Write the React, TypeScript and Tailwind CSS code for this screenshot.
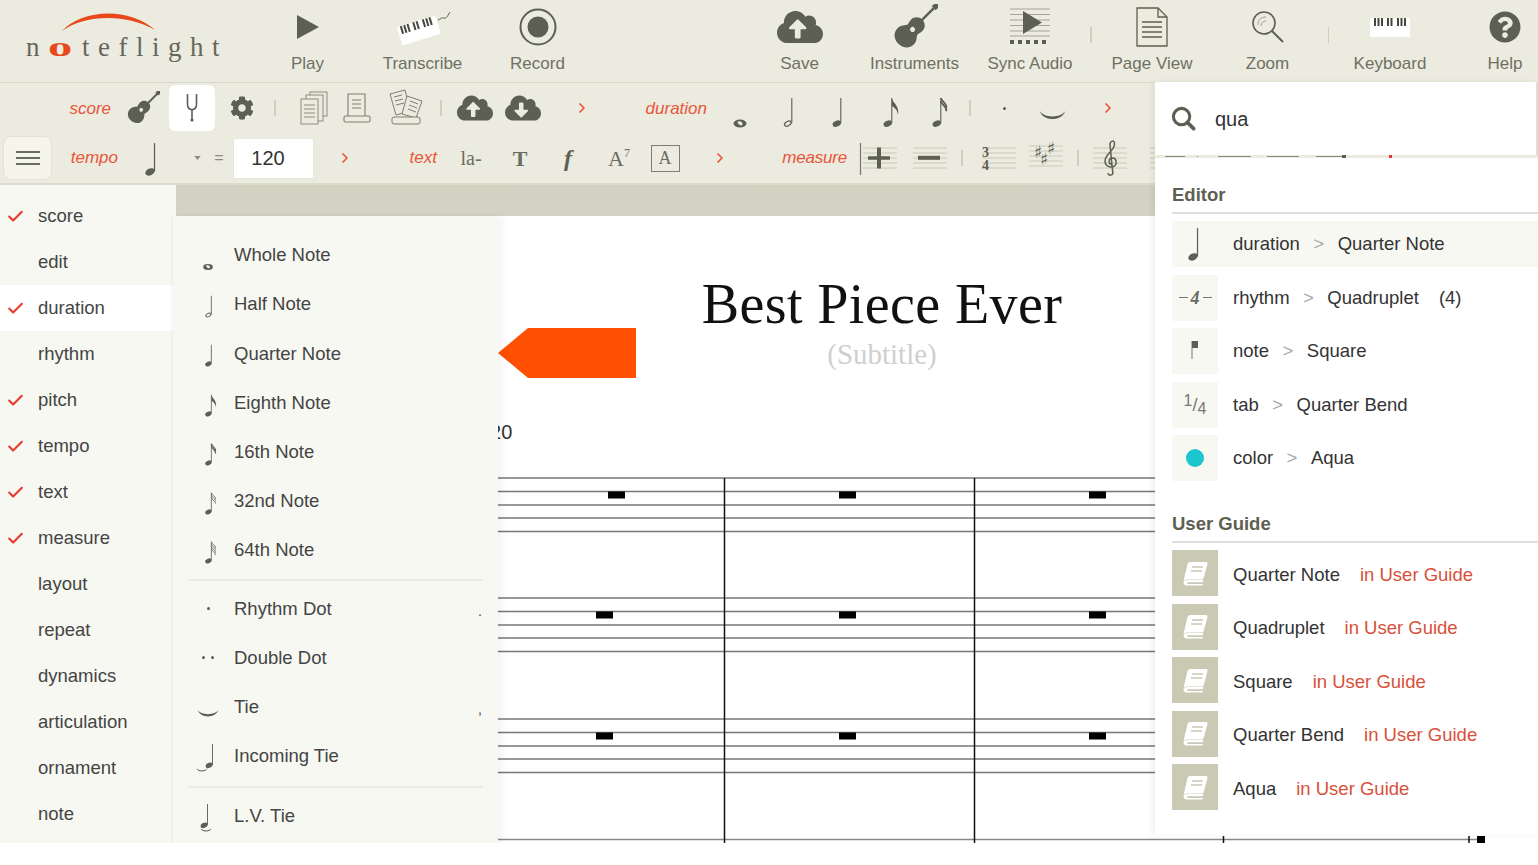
import React from "react";
import { Check, ChevronRight } from "lucide-react";
import { FaCloudUploadAlt, FaCloudDownloadAlt, FaCog, FaQuestionCircle } from "react-icons/fa";

const INK = "#5d5f52";

function Note({ kind = "quarter", flags = 0, className = "h-[32px] w-[24px]" }: { kind?: "whole" | "half" | "quarter"; flags?: number; className?: string }) {
  return (
    <svg viewBox="0 0 24 32" className={`shrink-0 ${className}`} fill={INK}>
      {kind === "whole" ? (
        <path fillRule="evenodd" d="M5.500 26.500a6.500 4 0 1 0 13 0a6.500 4 0 1 0-13 0zM9.800 24.800c.9-1.100 3.400-.6 4.300.9s.2 2.600-.7 2.700c-1.400.1-4.500-2-3.600-3.600z" />
      ) : (
        <>
          <path d="M13.800 1v25" stroke={INK} strokeWidth="1.100" />
          {kind === "half" ? (
            <ellipse cx="9.800" cy="26.600" rx="3.600" ry="2.100" fill="none" stroke={INK} strokeWidth="1.200" transform="rotate(-28 9.800 26.600)" />
          ) : (
            <ellipse cx="9.800" cy="26.600" rx="4.400" ry="3" transform="rotate(-25 9.800 26.600)" />
          )}
          {flags === 1 && <path d="M13.800 1c.8 5 8 7.500 6.200 17c-.4-5-3.600-7.500-6.200-9z" />}
          {flags > 1 &&
            Array.from({ length: flags }).map((_, i) => (
              <path key={i} d={`M13.800 ${1 + i * 3.2}c1 4 6 4.500 5.600 ${flags > 2 ? 8 : 10}`} fill="none" stroke={INK} strokeWidth={flags > 2 ? 1.1 : 1.7} />
            ))}
        </>
      )}
    </svg>
  );
}

function Tie({ className = "h-[11px] w-[27px]" }: { className?: string }) {
  return (
    <svg viewBox="0 0 30 12" className={`shrink-0 ${className}`} fill={INK}>
      <path d="M1 1c3 12 25 12 28 0c-4 8-24 8-28 0z" />
    </svg>
  );
}

function Guitar({ className }: { className?: string }) {
  return (
    <svg viewBox="0 0 40 40" className={`shrink-0 ${className}`} fill={INK}>
      <g transform="rotate(45 20 20)">
        <path d="M20 11c4 0 7 3 7 7c0 3-1.200 4-.8 5.500c.5 1.500 3.800 3.500 3.800 8c0 5.500-4.500 9-10 9s-10-3.500-10-9c0-4.500 3.300-6.500 3.800-8c.4-1.500-.8-2.500-.8-5.500c0-4 3-7 7-7z" />
        <rect x="18.900" y="-5" width="2.200" height="20" />
        <rect x="17.600" y="-9" width="4.800" height="6" />
        <circle cx="20" cy="23" r="2.200" fill="#ecebdf" />
      </g>
    </svg>
  );
}

function Fork() {
  return (
    <svg viewBox="0 0 14 30" className="h-[30px] w-[14px]" fill="none" stroke={INK} strokeWidth="1.600">
      <path d="M2.500 1v10c0 4 2 5.500 4.500 5.500s4.500-1.500 4.500-5.500V1" />
      <path d="M7 16v10" />
      <circle cx="7" cy="27" r="1.600" fill={INK} stroke="none" />
    </svg>
  );
}

function Pages() {
  return (
    <svg viewBox="0 0 28 34" className="h-[34px] w-[28px]" fill="#ecebdf" stroke="#8a8b7e" strokeWidth="1">
      <rect x="10" y="1" width="17" height="24" />
      <rect x="6" y="4" width="17" height="26" />
      <rect x="1" y="8" width="17" height="25" />
      <path d="M4 14h11M4 18h11M4 22h11M4 26h11" />
    </svg>
  );
}

function Printer() {
  return (
    <svg viewBox="0 0 28 32" className="h-[32px] w-[28px]" fill="none" stroke="#7d7e71" strokeWidth="1.100">
      <path d="M5 24V2h17v22" />
      <path d="M9 8h9M9 12h9M9 16h9" />
      <rect x="1" y="24" width="26" height="6" rx="1.500" />
    </svg>
  );
}

function MultiPrinter() {
  return (
    <svg viewBox="0 0 38 38" className="h-[38px] w-[38px]" fill="#ecebdf" stroke="#7d7e71" strokeWidth="1">
      <path d="M3 5l15-4 5 21-14 4z" />
      <path d="M20 7l15 5-6 17-14-4z" />
      <path d="M7 8l8-2M8 12l8-2M9 16l8-2M23 12l8 3M22 16l8 3M21 20l8 3" />
      <rect x="5" y="28" width="28" height="7" rx="2" />
    </svg>
  );
}

function Keys({ className }: { className?: string }) {
  return (
    <svg viewBox="0 0 40 19" className={className}>
      <rect width="40" height="19" fill="#ffffff" />
      {[4, 7.5, 11, 17, 20.5, 27, 30.5, 34].map((x) => (
        <rect key={x} x={x} y="0" width="2" height="8" fill="#45463d" />
      ))}
    </svg>
  );
}

function Transcribe() {
  return (
    <svg viewBox="0 0 56 36" className="h-[36px] w-[56px]">
      <g transform="rotate(-17 24 22)">
        <rect x="4" y="12" width="40" height="19" fill="#ffffff" />
        {[7, 10.5, 14, 20, 23.5, 30, 33.5, 37].map((x) => (
          <rect key={x} x={x} y="12" width="2" height="8" fill="#45463d" />
        ))}
      </g>
      <path d="M43 11c3-1 4-3 6-2s3-1 6-6" fill="none" stroke={INK} strokeWidth="1" />
    </svg>
  );
}

function SyncAudio() {
  return (
    <svg viewBox="0 0 42 38" className="h-[38px] w-[42px]">
      <path d="M1 1h40M1 6.500h40M1 12h40M1 17.500h40M1 23h40" stroke="#a5a699" strokeWidth="1" />
      <path d="M14 3l19 11.500L14 26z" fill={INK} />
      {[1, 9, 17, 25, 33].map((x) => (
        <rect key={x} x={x} y="32" width="4" height="4" fill={INK} />
      ))}
      <path d="M1 28h40" stroke="#a5a699" strokeWidth="1" />
    </svg>
  );
}

function PageView() {
  return (
    <svg viewBox="0 0 32 40" className="h-[40px] w-[32px]" fill="#ecebdf" stroke={INK} strokeWidth="1.300">
      <path d="M1 1h21l9 9v29H1z" />
      <path d="M22 1v9h9" fill="none" />
      <path d="M6 15h20M6 20h20M6 25h20M6 30h20" strokeWidth="1.600" />
    </svg>
  );
}

function ZoomGlass() {
  return (
    <svg viewBox="0 0 34 34" className="h-[34px] w-[34px]" fill="none" stroke={INK}>
      <circle cx="13" cy="13" r="11" strokeWidth="1.600" />
      <path d="M7 15c0-5 3-8 8-8M10 16c0-3 2-5 5-5" strokeWidth="1" stroke="#9c9d90" />
      <path d="M21 21l11 11" strokeWidth="2" />
    </svg>
  );
}

function Staff({ children, left }: { children?: React.ReactNode; left?: boolean }) {
  return (
    <svg viewBox="0 0 38 30" className="h-[30px] w-[38px] shrink-0 overflow-visible" fill={INK}>
      <path d="M3 5h34M3 10h34M3 15h34M3 20h34M3 25h34" stroke="#c8c8ba" strokeWidth="1" />
      {left && <path d="M.5 0v32" stroke="#75766a" strokeWidth="1.200" />}
      {children}
    </svg>
  );
}

function Clef() {
  return (
    <svg viewBox="0 0 40 38" className="h-[38px] w-[40px] shrink-0" fill="none">
      <path d="M3 9h34M3 14h34M3 19h34M3 24h34M3 29h34" stroke="#c8c8ba" strokeWidth="1" />
      <path d="M23 33c0 4-5 4-5 1M22.800 34L20 6c-.3-4 4.500-6 4.500-1c0 7-9.500 10-9.500 17c0 5 5 7 8.500 5.500c4-2 3.500-9-1.500-8.500c-3.500.4-4 5.500-.5 6.500" stroke={INK} strokeWidth="1.500" />
    </svg>
  );
}

function Sep({ className = "h-[16px]" }: { className?: string }) {
  return <div className={`w-[1.5px] shrink-0 bg-[#cfcfc1] ${className}`} />;
}

function Chev() {
  return <ChevronRight className="h-[16px] w-[16px] shrink-0 text-[#e8553a]" strokeWidth={2.6} />;
}

function Label({ children, className }: { children: React.ReactNode; className: string }) {
  return <div className={`flex items-center justify-end text-[17px] italic text-[#e8553a] ${className}`}>{children}</div>;
}

function Slot({ className, children }: { className: string; children?: React.ReactNode }) {
  return <div className={`flex h-full shrink-0 items-center justify-center ${className}`}>{children}</div>;
}

function TopItem({ label, className, children }: { label: string; className: string; children: React.ReactNode }) {
  return (
    <div className={`flex shrink-0 flex-col items-center ${className}`}>
      <div className="flex h-[54px] items-center justify-center">{children}</div>
      <div className="whitespace-nowrap text-[17px] leading-[20px] text-[#6f7064]">{label}</div>
    </div>
  );
}

function Header() {
  return (
    <div className="flex h-[83px] shrink-0 border-b border-[#d8d8ca] bg-[#ecebdf]">
      <div className="relative w-[250px] shrink-0 pl-[26px] pt-[30px]">
        <svg viewBox="0 0 100 24" className="absolute left-[61px] top-[9px] h-[23px] w-[95px]" preserveAspectRatio="none">
          <path d="M1 23C22 1 70-3 99 22C70 5 26 5 1 23z" fill="#e8481c" />
        </svg>
        <div className="flex whitespace-nowrap font-['Liberation_Serif',serif] text-[27px] leading-[34px] tracking-[8.500px] text-[#66675b]">
          <span>n</span>
          <span className="ml-[0px] inline-block w-[34px] origin-left scale-x-[1.800] font-bold leading-[34px] tracking-normal text-[#e8481c]">o</span>
          <span>teflight</span>
        </div>
      </div>
      <TopItem label="Play" className="w-[115px]">
        <svg viewBox="0 0 22 24" className="h-[24px] w-[22px]"><path d="M0 0l22 12L0 24z" fill={INK} /></svg>
      </TopItem>
      <TopItem label="Transcribe" className="w-[115px]"><Transcribe /></TopItem>
      <TopItem label="Record" className="w-[115px]">
        <svg viewBox="0 0 38 38" className="h-[38px] w-[38px]"><circle cx="19" cy="19" r="17.500" fill="none" stroke={INK} strokeWidth="2" /><circle cx="19" cy="19" r="10.500" fill={INK} /></svg>
      </TopItem>
      <div className="w-[147px] shrink-0" />
      <TopItem label="Save" className="w-[115px]"><FaCloudUploadAlt className="h-[44px] w-[46px] text-[#5d5f52]" /></TopItem>
      <TopItem label="Instruments" className="w-[115px]"><Guitar className="h-[46px] w-[46px]" /></TopItem>
      <TopItem label="Sync Audio" className="w-[116px]"><SyncAudio /></TopItem>
      <div className="flex w-[6px] shrink-0 items-start justify-center pt-[27px]"><Sep /></div>
      <TopItem label="Page View" className="w-[116px]"><PageView /></TopItem>
      <TopItem label="Zoom" className="w-[115px]"><ZoomGlass /></TopItem>
      <div className="flex w-[7px] shrink-0 items-start justify-center pt-[27px]"><Sep /></div>
      <TopItem label="Keyboard" className="w-[116px]"><Keys className="h-[19px] w-[40px]" /></TopItem>
      <TopItem label="Help" className="w-[114px]"><FaQuestionCircle className="h-[32px] w-[32px] text-[#5d5f52]" /></TopItem>
    </div>
  );
}

function Toolbar() {
  return (
    <div className="flex h-[102px] shrink-0 flex-col border-b-2 border-[#dcdccd] bg-[#ecebdf]">
      <div className="flex h-[50px] shrink-0 pl-[70px]">
        <Label className="w-[41px] pt-[2px]">score</Label>
        <Slot className="ml-[6px] w-[52px]"><Guitar className="h-[34px] w-[34px]" /></Slot>
        <Slot className="w-[46px]">
          <div className="flex h-[46px] w-[46px] items-center justify-center rounded-[6px] bg-white"><Fork /></div>
        </Slot>
        <Slot className="w-[54px]"><FaCog className="h-[24px] w-[24px] text-[#5d5f52]" /></Slot>
        <Slot className="w-[12px]"><Sep /></Slot>
        <Slot className="ml-[10px] w-[46px]"><Pages /></Slot>
        <Slot className="w-[40px]"><Printer /></Slot>
        <Slot className="w-[58px]"><MultiPrinter /></Slot>
        <Slot className="w-[12px]"><Sep /></Slot>
        <Slot className="w-[56px]"><FaCloudUploadAlt className="h-[34px] w-[36px] text-[#5d5f52]" /></Slot>
        <Slot className="w-[40px]"><FaCloudDownloadAlt className="h-[34px] w-[36px] text-[#5d5f52]" /></Slot>
        <Slot className="w-[78px]"><Chev /></Slot>
        <Label className="ml-[24px] w-[62px] pt-[2px]">duration</Label>
        <Slot className="w-[66px] pt-[10px]"><Note kind="whole" /></Slot>
        <Slot className="w-[34px] pt-[10px]"><Note kind="half" /></Slot>
        <Slot className="w-[64px] pt-[10px]"><Note /></Slot>
        <Slot className="w-[38px] pt-[10px]"><Note flags={1} /></Slot>
        <Slot className="w-[60px] pt-[10px]"><Note flags={2} /></Slot>
        <Slot className="w-[2px]"><Sep /></Slot>
        <Slot className="w-[66px]"><div className="h-[3px] w-[3px] rounded-full bg-[#5d5f52]" /></Slot>
        <Slot className="w-[30px] pt-[14px]"><Tie /></Slot>
        <Slot className="w-[82px]"><Chev /></Slot>
      </div>
      <div className="flex h-[50px] shrink-0 pl-[3px]">
        <Slot className="w-[49px]">
          <div className="flex h-[44px] w-[49px] flex-col items-center justify-center gap-[4px] rounded-[8px] border border-[#e2e2d6] bg-[#f5f5ec]">
            <div className="h-[2px] w-[24px] bg-[#6b6c60]" />
            <div className="h-[2px] w-[24px] bg-[#6b6c60]" />
            <div className="h-[2px] w-[24px] bg-[#6b6c60]" />
          </div>
        </Slot>
        <Label className="ml-[18px] w-[48px]">tempo</Label>
        <Slot className="w-[68px] pt-[4px]"><Note className="h-[36px] w-[27px]" /></Slot>
        <Slot className="w-[22px]">
          <svg viewBox="0 0 8 5" className="h-[4px] w-[7px]"><path d="M0 0h8L4 5z" fill="#8a8b7e" /></svg>
        </Slot>
        <Slot className="w-[22px] text-[16px] text-[#8a8b7e]">=</Slot>
        <Slot className="ml-[3px] w-[81px]">
          <div className="flex h-[41px] w-[81px] items-center justify-center border border-[#e6e6da] bg-white pr-[11px] text-[20px] text-[#333333]">120</div>
        </Slot>
        <Slot className="w-[62px]"><Chev /></Slot>
        <Label className="ml-[32px] w-[29px]">text</Label>
        <Slot className="w-[68px] font-['Liberation_Serif',serif] text-[20px] text-[#6b6c60]">la-</Slot>
        <Slot className="w-[30px] font-['Liberation_Serif',serif] text-[22px] font-bold text-[#6b6c60]">T</Slot>
        <Slot className="w-[66px] font-['Liberation_Serif',serif] text-[24px] font-bold italic text-[#5d5f52]">f</Slot>
        <Slot className="w-[36px] font-['Liberation_Serif',serif] text-[22px] text-[#6b6c60]">
          A<span className="mb-[10px] text-[12px]">7</span>
        </Slot>
        <Slot className="w-[56px]">
          <div className="flex h-[27px] w-[29px] items-center justify-center border border-[#7d7e71] font-['Liberation_Serif',serif] text-[18px] text-[#6b6c60]">A</div>
        </Slot>
        <Slot className="w-[54px]"><Chev /></Slot>
        <Label className="ml-[36px] w-[64px] tracking-[-0.200px]">measure</Label>
        <Slot className="ml-[13px] w-[38px]">
          <Staff left><path d="M8 13.200h9V4.500h4v8.700h9v3.600h-9v8.700h-4v-8.700H8z" /></Staff>
        </Slot>
        <Slot className="w-[62px]"><Staff><rect x="8" y="12.800" width="22" height="4" /></Staff></Slot>
        <Slot className="w-[4px]"><Sep /></Slot>
        <Slot className="w-[68px]">
          <Staff>
            <text x="3" y="14" fontSize="14" fontWeight="700" fontFamily="Liberation Serif, serif">3</text>
            <text x="3" y="27" fontSize="14" fontWeight="700" fontFamily="Liberation Serif, serif">4</text>
          </Staff>
        </Slot>
        <Slot className="w-[26px] pb-[4px]">
          <Staff>
            <text x="8" y="17" fontSize="17" fontWeight="700" fontFamily="DejaVu Sans, sans-serif">♯</text>
            <text x="14" y="24" fontSize="17" fontWeight="700" fontFamily="DejaVu Sans, sans-serif">♯</text>
            <text x="21" y="13" fontSize="17" fontWeight="700" fontFamily="DejaVu Sans, sans-serif">♯</text>
          </Staff>
        </Slot>
        <Slot className="w-[40px]"><Sep /></Slot>
        <Slot className="w-[24px]"><Clef /></Slot>
        <Slot className="ml-[25px] w-[38px]"><Staff /></Slot>
      </div>
    </div>
  );
}

const SIDE = [
  ["score", true], ["edit", false], ["duration", true], ["rhythm", false], ["pitch", true], ["tempo", true], ["text", true],
  ["measure", true], ["layout", false], ["repeat", false], ["dynamics", false], ["articulation", false], ["ornament", false], ["note", false],
] as const;

function Sidebar() {
  return (
    <div className="relative z-10 w-[176px] shrink-0 bg-[#f8f8f2] pt-[8px]">
      {SIDE.map(([name, on]) => (
        <div key={name} className={`mr-[3px] flex h-[46px] items-center pl-[6px] text-[18.500px] text-[#444444] ${name === "duration" ? "bg-white" : ""}`}>
          <div className="w-[32px] shrink-0">{on && <Check className="h-[19px] w-[19px] text-[#e6392b]" strokeWidth={2.6} />}</div>
          <div className="pt-[0.500px]">{name}</div>
        </div>
      ))}
    </div>
  );
}

function MenuRow({ icon, label, hint, className = "h-[49.170px]" }: { icon: React.ReactNode; label: string; hint?: string; className?: string }) {
  return (
    <div className={`flex items-center pl-[12px] pr-[16px] text-[18.500px] text-[#444444] ${className}`}>
      <div className="flex w-[46px] shrink-0 items-center justify-center">{icon}</div>
      <div className="ml-[3px] flex-1">{label}</div>
      {hint && <div className="pt-[4px] text-[14px] leading-none text-[#444444]">{hint}</div>}
    </div>
  );
}

function NoteWithTie({ incoming }: { incoming?: boolean }) {
  return (
    <div className="relative mt-[6px] h-[32px] w-[24px]">
      <Note className={`h-[27px] w-[20px] ${incoming ? "ml-[5px]" : ""}`} />
      <div className={`absolute top-[24px] ${incoming ? "left-0" : "left-[4px]"}`}><Tie className="h-[6px] w-[12px]" /></div>
    </div>
  );
}

function Menu() {
  const n = "mt-[6px] ml-[4px] h-[24px] w-[18px]";
  return (
    <div className="relative z-20 ml-[-3px] h-full w-[325px] shrink-0 bg-[#f8f8f2] pt-[14.500px] shadow-[4px_0_8px_rgba(0,0,0,0.05),-2px_0_3px_rgba(0,0,0,0.04)]">
      <MenuRow label="Whole Note" icon={<Note kind="whole" className="mt-[8px] h-[24px] w-[18px]" />} />
      <MenuRow label="Half Note" icon={<Note kind="half" className={n} />} />
      <MenuRow label="Quarter Note" icon={<Note className={n} />} />
      <MenuRow label="Eighth Note" icon={<Note flags={1} className={n} />} />
      <MenuRow label="16th Note" icon={<Note flags={2} className={n} />} />
      <MenuRow label="32nd Note" icon={<Note flags={3} className={n} />} />
      <MenuRow label="64th Note" icon={<Note flags={4} className={n} />} />
      <div className="mx-[15px] mb-[3px] mt-[4.500px] h-[2px] bg-[#ecebdf]" />
      <MenuRow label="Rhythm Dot" hint="." icon={<div className="h-[3px] w-[3px] rounded-full bg-[#5d5f52]" />} />
      <MenuRow label="Double Dot" icon={<div className="flex gap-[6px]"><div className="h-[3px] w-[3px] rounded-full bg-[#5d5f52]" /><div className="h-[3px] w-[3px] rounded-full bg-[#5d5f52]" /></div>} />
      <MenuRow label="Tie" hint="," icon={<Tie className="mt-[14px] h-[9px] w-[22px]" />} />
      <MenuRow label="Incoming Tie" icon={<NoteWithTie incoming />} />
      <div className="mx-[15px] mb-[4px] mt-[5px] h-[2px] bg-[#ecebdf]" />
      <MenuRow label="L.V. Tie" icon={<NoteWithTie />} />
    </div>
  );
}

function Score() {
  const tops = [8, 128, 249];
  const rests = [
    [110, 341, 591],
    [98, 341, 591],
    [98, 341, 591],
  ];
  return (
    <svg viewBox="0 0 1040 373" className="mt-[26px] block h-[373px] w-[1040px] shrink-0">
      {tops.map((t, si) => (
        <g key={t}>
          {[0, 13.5, 27, 40, 53.5].map((d) => (
            <path key={d} d={`M0 ${t + d}H657`} stroke="#777777" strokeWidth="1.300" />
          ))}
          {rests[si].map((x) => (
            <rect key={x} x={x} y={t + 13.5} width="17" height="7" fill="#000000" />
          ))}
        </g>
      ))}
      <path d="M0 369.500H982" stroke="#888888" strokeWidth="1.600" />
      <path d="M226.500 8V373M476.500 8V373" stroke="#111111" strokeWidth="1.500" />
      <path d="M725.500 366v7M971 366v7" stroke="#111111" strokeWidth="1.500" />
      <rect x="979" y="366" width="8" height="7" fill="#000000" />
    </svg>
  );
}

function Page() {
  return (
    <div className="relative h-full min-w-0 flex-1 overflow-hidden bg-white">
      <div className="w-[768px] pt-[58px] text-center font-['Liberation_Serif',serif]">
        <div className="text-[56px] leading-[60px] tracking-[0.400px] text-[#111111]">Best Piece Ever</div>
        <div className="mt-[3px] text-[29px] leading-[34px] text-[#cfcfcf]">(Subtitle)</div>
      </div>
      <div className="ml-[-19px] mt-[49px] text-[20px] leading-[24px] text-[#333333]">120</div>
      <Score />
      <svg viewBox="0 0 138 50" className="absolute left-0 top-[112px] h-[50px] w-[138px]">
        <path d="M0 25L30 0H138V50H30z" fill="#ff4f00" />
      </svg>
    </div>
  );
}

function Book() {
  return (
    <svg viewBox="0 0 27 27" className="h-[27px] w-[27px]">
      <path d="M8 2h16c1.200 0 1.800.8 1.500 2l-3.800 14c-.3 1-1 1.500-2 1.500H5c-1.500 0-3 .5-3.500 1.500L5.500 4C6 2.800 6.800 2 8 2z" fill="#ffffff" />
      <path d="M1.500 22c0-1.300 1.500-2 3.500-2h16.500l-.7 2.200H6c-1 0-1 1.800 0 1.800h15l-.5 1.500H4.500c-2 0-3-1.600-3-3.500z" fill="#ffffff" />
      <path d="M10 7h11M9 11h11" stroke="#c9c9b4" strokeWidth="1.500" />
    </svg>
  );
}

const Gt = ({ className }: { className: string }) => <span className={`text-[#a9a9a9] ${className}`}>&gt;</span>;

function EditorRow({ icon, first, second, extra, className = "" }: { icon: React.ReactNode; first: string; second: string; extra?: string; className?: string }) {
  return (
    <div className={`flex h-[46px] items-center text-[18.500px] text-[#333333] ${className}`}>
      <div className="flex h-[46px] w-[46px] shrink-0 items-center justify-center bg-[#f8f8f2]">{icon}</div>
      <div className="ml-[15px] flex items-center">
        <div className="whitespace-nowrap">{first}</div>
        <Gt className="mx-[13.500px]" />
        <div className="whitespace-nowrap">{second}</div>
        {extra && <div className="ml-[20px]">{extra}</div>}
      </div>
    </div>
  );
}

function GuideRow({ name }: { name: string }) {
  return (
    <div className="flex h-[46px] items-center text-[18.500px] text-[#333333]">
      <div className="flex h-[46px] w-[46px] shrink-0 items-center justify-center bg-[#c9c9b4]"><Book /></div>
      <div className="ml-[15px] flex items-center pt-[3px]">
        <div className="whitespace-nowrap">{name}</div>
        <div className="ml-[20px] whitespace-nowrap text-[#d9503a]">in User Guide</div>
      </div>
    </div>
  );
}

function SectionTitle({ children }: { children: React.ReactNode }) {
  return <div className="border-b-2 border-[#dededa] pb-[6px] text-[18.500px] font-bold leading-[22px] text-[#5d5f52]">{children}</div>;
}

function SearchPanel() {
  return (
    <div className="absolute left-[1155px] top-[82px] z-30 flex h-[753px] w-[383px] flex-col bg-white shadow-[-3px_0_6px_rgba(0,0,0,0.06)]">
      <div className="flex h-[73px] shrink-0 items-center border-r-2 border-[#dddddd] pl-[16px]">
        <svg viewBox="0 0 26 26" className="h-[25px] w-[25px]" fill="none" stroke={INK}>
          <circle cx="11" cy="11" r="8.500" strokeWidth="3.200" />
          <path d="M17 17l6.500 6.500" strokeWidth="3.800" strokeLinecap="round" />
        </svg>
        <div className="ml-[19px] pt-[1px] text-[20px] text-[#333333]">qua</div>
      </div>
      <svg viewBox="0 0 383 3" className="block h-[3px] w-[383px] shrink-0">
        <rect width="383" height="3" fill="#ecebdf" />
        <path d="M10 1.500h20M42 1.500h1M63 1.500h33M112 1.500h32M161 1.500h27" stroke="#8a8b7e" strokeWidth="1" />
        <rect x="187" y="0" width="4" height="3" fill="#5d5f52" />
        <rect x="234" y="0" width="3" height="3" fill="#e6392b" />
      </svg>
      <div className="pl-[17px] pt-[26px]">
        <SectionTitle>Editor</SectionTitle>
        <div className="mt-[7px] flex flex-col gap-[7.500px]">
          <EditorRow className="bg-[#f8f8f2]" first="duration" second="Quarter Note" icon={<Note className="mt-[2px] h-[36px] w-[27px]" />} />
          <EditorRow first="rhythm" second="Quadruplet" extra="(4)" icon={
            <div className="flex items-center gap-[3px]"><div className="h-[1px] w-[9px] bg-[#777777]" /><span className="font-['Liberation_Serif',serif] text-[18px] font-bold italic leading-none text-[#6b6c60]">4</span><div className="h-[1px] w-[9px] bg-[#777777]" /></div>
          } />
          <EditorRow first="note" second="Square" icon={
            <svg viewBox="0 0 8 18" className="mb-[3px] h-[18px] w-[8px]"><path d="M1 0v18" stroke="#777777" strokeWidth="1" /><rect x="1" y="0" width="6" height="7" fill="#5d5f52" /></svg>
          } />
          <EditorRow first="tab" second="Quarter Bend" icon={
            <div className="flex items-center text-[#777777]"><span className="mb-[8px] text-[16px] leading-none">1</span><span className="text-[18px] leading-none">/</span><span className="mt-[8px] text-[16px] leading-none">4</span></div>
          } />
          <EditorRow first="color" second="Aqua" icon={<div className="h-[18px] w-[18px] rounded-full bg-[#1cc6cf]" />} />
        </div>
        <div className="mt-[32px]"><SectionTitle>User Guide</SectionTitle></div>
        <div className="mt-[7px] flex flex-col gap-[7.600px]">
          {["Quarter Note", "Quadruplet", "Square", "Quarter Bend", "Aqua"].map((n) => <GuideRow key={n} name={n} />)}
        </div>
      </div>
    </div>
  );
}

export default function App() {
  return (
    <div className="relative h-[865px] w-[1538px] overflow-hidden bg-white font-['Liberation_Sans',Arial,sans-serif]">
      <div className="flex h-[843px] flex-col overflow-hidden">
        <Header />
        <Toolbar />
        <div className="flex min-h-0 flex-1">
          <Sidebar />
          <div className="flex min-w-0 flex-1 flex-col">
            <div className="h-[31px] shrink-0 bg-gradient-to-b from-[#d0d1c1] to-[#d3d4c5]" />
            <div className="flex min-h-0 flex-1">
              <Menu />
              <Page />
            </div>
          </div>
        </div>
      </div>
      <SearchPanel />
    </div>
  );
}
